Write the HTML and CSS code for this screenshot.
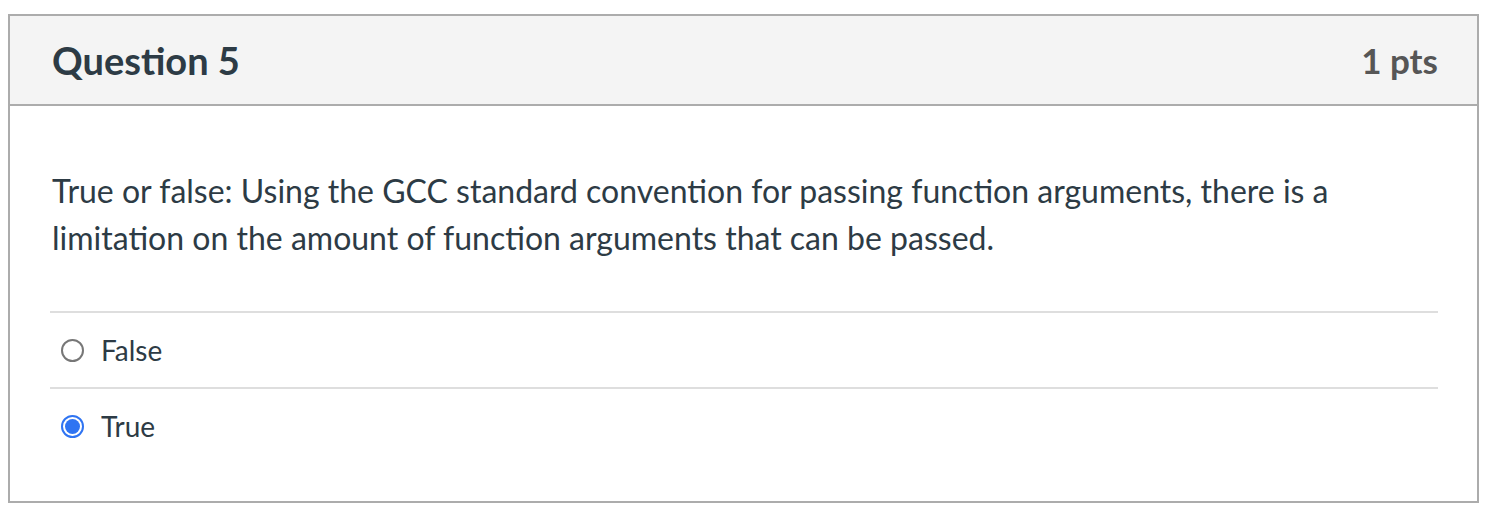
FILE: index.html
```html
<!DOCTYPE html>
<html>
<head>
<meta charset="utf-8">
<link rel="stylesheet" href="styles.css">
</head>
<body>
<div class="question">
  <div class="header">
    <h2 class="title">Question 5</h2>
    <div class="pts">1 pts</div>
  </div>
  <div class="content">
    <p class="text">True or false: Using the GCC standard convention for passing function arguments, there is a limitation on the amount of function arguments that can be passed.</p>
    <div class="answers">
      <label class="answer">
        <span class="radio"></span>
        <span class="label">False</span>
      </label>
      <label class="answer">
        <span class="radio checked"></span>
        <span class="label">True</span>
      </label>
    </div>
  </div>
</div>
</body>
</html>
```
FILE: styles.css
```css
html, body {
  margin: 0;
  padding: 0;
  background: #fff;
}
body {
  padding: 14px 16px 0 8px;
  font-family: Lato, "Open Sans", sans-serif;
  color: #2d3b45;
}
.question {
  width: 1471px;
  box-sizing: border-box;
  border: 2px solid #acacac;
  height: 489px;
}
.header {
  display: flex;
  align-items: center;
  justify-content: space-between;
  height: 90px;
  box-sizing: border-box;
  padding: 0 39px 1px 42px;
  background: #f4f4f4;
  border-bottom: 2px solid #acacac;
}
.title {
  margin: 0;
  font-size: 38px;
  font-weight: 700;
  color: #2d3b45;
}
.pts {
  font-size: 35px;
  font-weight: 700;
  color: #565656;
}
.content {
  padding: 61px 39px 0 40px;
}
.text {
  margin: 0 0 0 2px;
  font-size: 32px;
  line-height: 47px;
}
.answers {
  margin-top: 50px;
}
.answer {
  display: flex;
  align-items: center;
  height: 76px;
  border-top: 2px solid #dedede;
  box-sizing: border-box;
  padding-left: 11px;
}
.radio {
  width: 23px;
  height: 23px;
  border-radius: 50%;
  border: 2px solid #777;
  box-sizing: border-box;
  margin-right: 17px;
  position: relative;
}
.radio.checked {
  border-color: #2f74f2;
}
.radio.checked::after {
  content: "";
  position: absolute;
  left: 2px;
  top: 2px;
  width: 15px;
  height: 15px;
  border-radius: 50%;
  background: #2f74f2;
}
.label {
  font-size: 28px;
}
```
